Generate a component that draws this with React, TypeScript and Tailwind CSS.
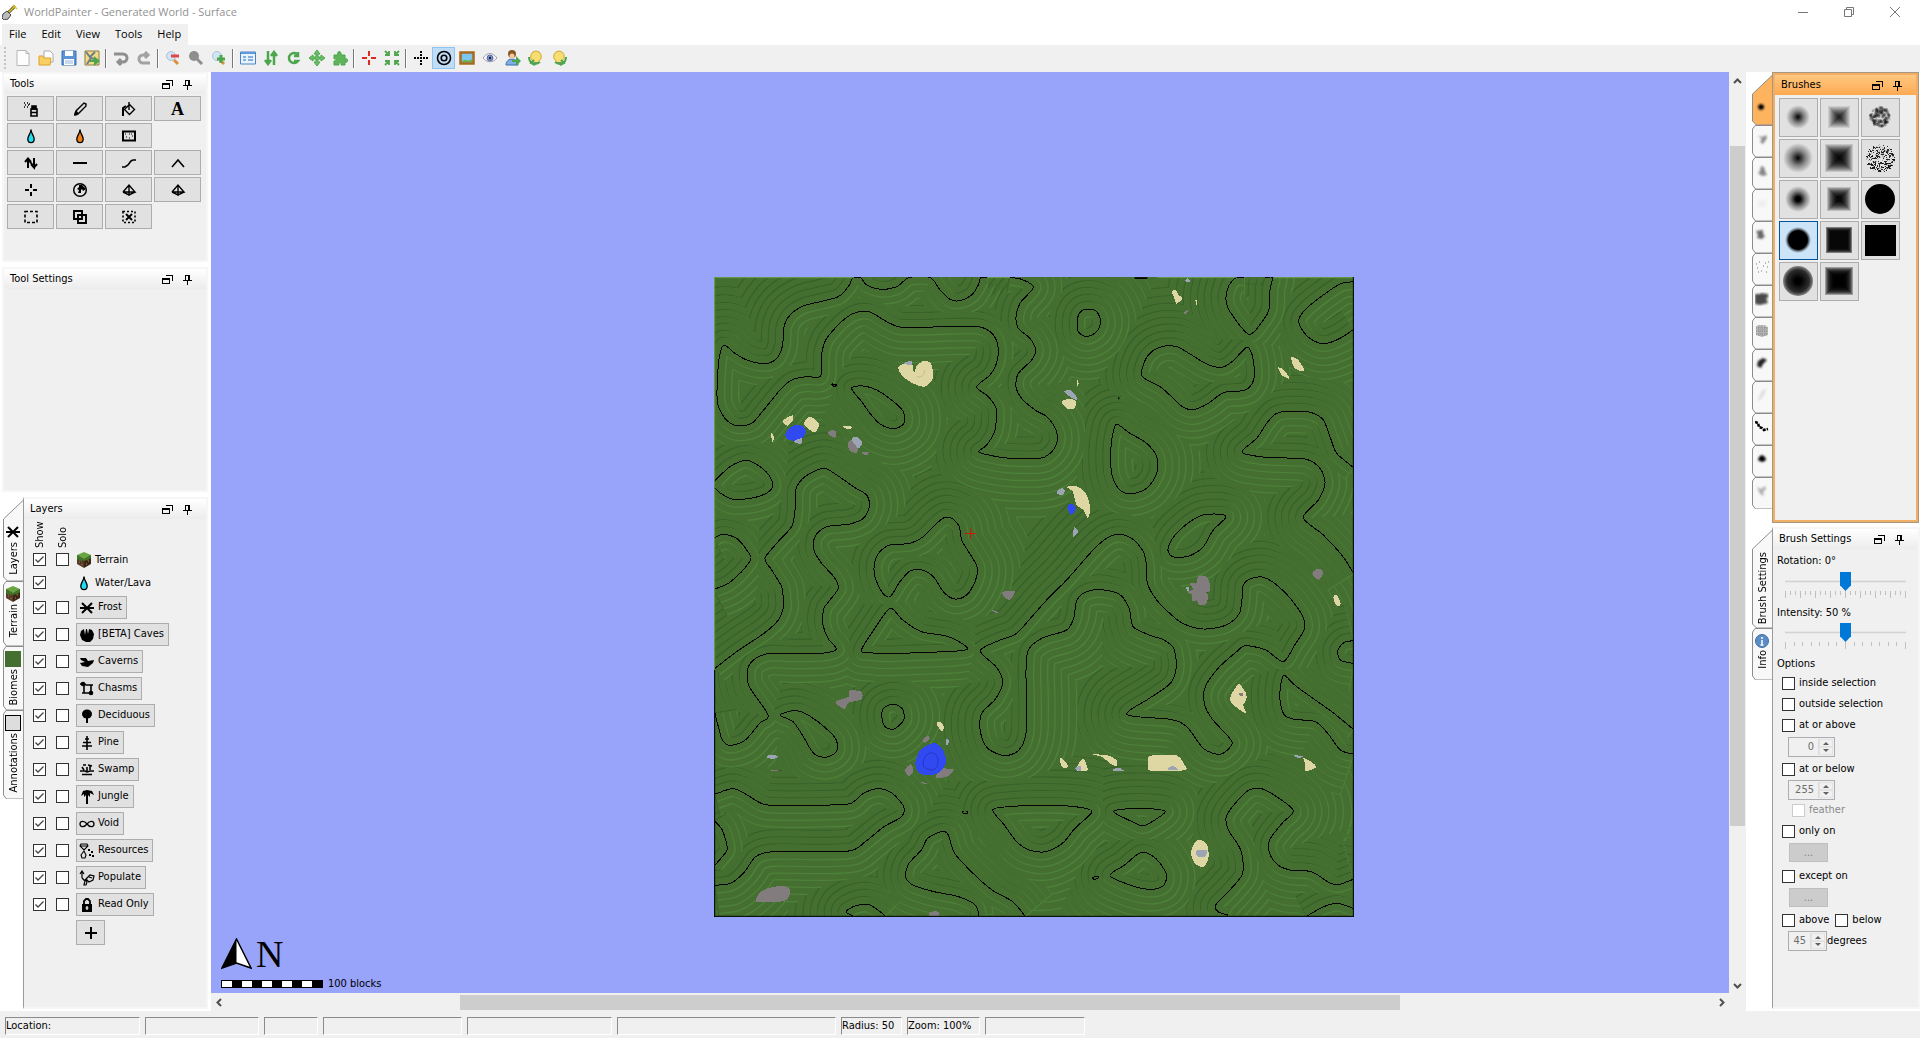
import { useState } from "react";
import type { ReactNode } from "react";
import clsx from "clsx";

type Point = [number, number];

/* ------------------------------------------------------------------ */
/* Terrain map data                                                    */
/* ------------------------------------------------------------------ */

const north = (points: Point[]) => points;
const east = (points: Point[]) => points.map(([x, y]): Point => [x + 960, y]);
const south = (points: Point[]) => points.map(([x, y]): Point => [Math.round(x * 1.2438), y + 960]);

function smooth(points: Point[], closed: boolean) {
  const n = points.length;
  const at = (i: number) => (closed ? points[(i + n) % n] : points[Math.max(0, Math.min(n - 1, i))]);
  let d = `M${points[0][0]} ${points[0][1]}`;
  const last = closed ? n : n - 1;
  for (let i = 0; i < last; i++) {
    const [p0, p1, p2, p3] = [at(i - 1), at(i), at(i + 1), at(i + 2)];
    const c1 = [p1[0] + (p2[0] - p0[0]) / 7, p1[1] + (p2[1] - p0[1]) / 7];
    const c2 = [p2[0] - (p3[0] - p1[0]) / 7, p2[1] - (p3[1] - p1[1]) / 7];
    d += `C${c1.map(Math.round).join(" ")} ${c2.map(Math.round).join(" ")} ${p2.join(" ")}`;
  }
  return closed ? d + "Z" : d;
}

const openContours: Point[][] = [
  [
    ...north([[428, 22], [415, 50], [385, 80], [330, 95], [280, 108], [240, 135], [222, 170], [218, 225], [205, 260], [180, 278], [150, 280], [110, 270], [75, 250], [42, 225], [28, 260], [22, 330], [23, 400], [45, 445], [80, 467], [125, 460], [165, 415], [210, 360], [245, 330], [290, 320], [332, 318], [335, 250], [350, 205], [400, 150], [440, 127], [480, 126], [530, 155], [570, 171], [640, 172], [720, 169], [800, 169], [840, 185], [862, 220], [862, 270], [840, 315], [800, 350], [835, 380], [858, 415], [855, 480], [830, 525], [806, 545], [840, 556], [900, 565]]),
    ...east([[30, 565], [60, 550], [80, 520], [78, 480], [50, 440], [15, 420]]),
    ...north([[935, 385], [918, 350], [925, 310], [965, 270], [977, 240], [960, 205], [925, 175], [918, 140], [930, 100], [970, 52], [935, 28], [900, 22]]),
  ],
  north([[428, 23], [452, 23], [470, 45], [515, 58], [560, 50], [597, 23], [661, 23], [690, 60], [720, 88], [750, 92], [785, 75], [805, 45], [812, 23], [832, 23]]),
  north([[12, 635], [60, 590], [110, 571], [150, 590], [180, 620], [188, 650], [165, 672], [120, 685], [70, 688], [35, 672], [12, 652]]),
  north([[12, 805], [40, 793], [80, 805], [110, 840], [123, 865], [95, 905], [55, 940], [12, 958]]),
  [
    ...south([[12, 235], [70, 180], [130, 130], [165, 90], [178, 50]]),
    ...north([[220, 990], [215, 950], [185, 900], [165, 865], [200, 820], [245, 770], [255, 720], [257, 660], [285, 620], [340, 595], [380, 615], [430, 650], [470, 675], [478, 710], [460, 745], [420, 762], [350, 770], [315, 800], [312, 840], [335, 880], [375, 925], [385, 955], [360, 990]]),
    ...south([[275, 55], [272, 100], [285, 145], [305, 178], [270, 190], [200, 192], [145, 190], [110, 205], [92, 235], [95, 290], [140, 375], [120, 400], [85, 450], [50, 466], [30, 450], [20, 410], [12, 370]]),
  ],
  east([[642, 23], [618, 23], [595, 50], [588, 90], [600, 125], [657, 193], [700, 150], [718, 115], [720, 60], [727, 23], [706, 23]]),
  east([[971, 35], [930, 42], [880, 75], [830, 115], [806, 150], [820, 185], [850, 212], [885, 221], [930, 205], [971, 178]]),
  east([[971, 593], [920, 550], [900, 500], [880, 450], [845, 428], [790, 423], [740, 430], [710, 460], [680, 505], [636, 546], [690, 560], [770, 564], [830, 568], [870, 595], [885, 640], [865, 690], [820, 743], [880, 795], [935, 855], [971, 910]]),
  south([[1552, 152], [1530, 157], [1515, 180], [1520, 210], [1552, 220]]),
  south([[1552, 492], [1520, 480], [1490, 430], [1460, 395], [1410, 388], [1385, 375], [1375, 330], [1377, 280], [1385, 256], [1410, 285], [1460, 330], [1510, 375], [1552, 418]]),
  south([[12, 612], [55, 596], [90, 615], [130, 643], [200, 647], [290, 645], [340, 640], [370, 610], [405, 596], [440, 610], [467, 650], [462, 680], [420, 710], [375, 755], [340, 782], [250, 786], [150, 785], [110, 800], [80, 850], [50, 880], [12, 886]]),
  south([[12, 695], [30, 720], [42, 775], [30, 800], [12, 825]]),
  south([[648, 978], [640, 945], [600, 920], [540, 905], [490, 885], [472, 860], [480, 820], [510, 780], [525, 745], [560, 724], [575, 735], [590, 790], [630, 845], [680, 900], [730, 935], [760, 978]]),
  south([[345, 978], [328, 965], [350, 948], [380, 943], [405, 960], [422, 978]]),
  south([[1250, 976], [1225, 965], [1220, 945], [1250, 905], [1285, 850], [1280, 780], [1250, 720], [1245, 680], [1270, 635], [1300, 600], [1330, 596], [1360, 615], [1407, 662], [1380, 700], [1350, 750], [1350, 790], [1370, 825], [1400, 840], [1450, 845], [1490, 875], [1515, 884], [1552, 868]]),
  south([[1440, 978], [1480, 950], [1515, 940], [1552, 955]]),
];

const closedContours: Point[][] = [
  north([[425, 355], [460, 348], [500, 360], [545, 390], [580, 425], [582, 460], [550, 477], [510, 462], [480, 430], [455, 395]]),
  north([[540, 980], [570, 935], [600, 903], [635, 900], [670, 920], [700, 965], [735, 987], [770, 975], [795, 935], [802, 895], [785, 860], [755, 810], [748, 770], [730, 748], [705, 742], [680, 760], [640, 800], [600, 820], [540, 825], [510, 845], [493, 880], [495, 920], [515, 965]]),
  east([[142, 150], [152, 125], [175, 117], [200, 125], [212, 155], [200, 185], [170, 200], [145, 185]]),
  east([[337, 320], [340, 285], [360, 250], [395, 230], [440, 230], [480, 252], [530, 282], [575, 292], [610, 272], [650, 232], [668, 260], [673, 320], [655, 355], [625, 364], [580, 368], [535, 400], [495, 418], [460, 412], [430, 385], [390, 350]]),
  east([[260, 463], [247, 500], [242, 560], [245, 610], [265, 655], [300, 672], [350, 655], [380, 610], [380, 560], [350, 520], [300, 490]]),
  east([[415, 830], [435, 795], [480, 755], [520, 735], [570, 733], [587, 743], [550, 780], [520, 830], [480, 857], [435, 862], [417, 850]]),
  [
    ...east([[50, 990], [110, 930], [180, 850], [225, 808], [265, 793], [305, 805], [340, 845], [350, 890], [352, 940], [380, 990]]),
    ...south([[1100, 60], [1140, 100], [1190, 117], [1245, 105], [1277, 70], [1284, 20]]),
    ...east([[640, 945], [665, 925], [700, 922], [740, 945], [785, 990]]),
    ...south([[1430, 80], [1433, 120], [1410, 165], [1383, 215], [1340, 180], [1290, 167], [1270, 185], [1225, 235], [1195, 290], [1192, 340], [1210, 385], [1250, 440], [1258, 465], [1230, 493], [1190, 475], [1150, 410], [1110, 388], [1006, 374], [1060, 325], [1110, 280], [1125, 230], [1118, 175], [1095, 150], [1060, 135], [1020, 110], [1012, 60], [990, 15], [950, 0], [910, 4], [885, 30], [878, 80], [860, 120], [800, 145], [768, 180], [762, 240], [764, 330], [762, 430], [745, 480], [710, 497], [670, 475], [652, 425], [655, 370], [690, 325], [706, 275], [690, 230], [652, 182], [700, 150], [740, 130], [780, 75]]),
  ],
  south([[365, 180], [400, 110], [435, 55], [465, 90], [510, 125], [570, 138], [605, 158], [621, 178], [570, 185], [500, 188], [430, 192], [385, 188]]),
  south([[170, 375], [205, 362], [240, 378], [280, 415], [305, 450], [305, 485], [280, 502], [250, 490], [225, 440], [200, 395]]),
  south([[415, 385], [418, 355], [442, 342], [465, 358], [467, 390], [445, 417], [422, 410]]),
  south([[682, 660], [720, 650], [800, 646], [880, 650], [921, 665], [880, 715], [850, 760], [810, 785], [770, 780], [740, 755], [710, 705]]),
  south([[973, 665], [1010, 656], [1060, 656], [1098, 665], [1060, 700], [1040, 707], [1015, 693]]),
  south([[965, 857], [1000, 825], [1040, 787], [1075, 805], [1100, 850], [1095, 885], [1065, 898], [1020, 888]]),
];

// Peaks too small to be ringed by further height lines
const tinyContours: Point[][] = [
  north([[365, 342], [373, 349], [381, 345]]),
  south([[611, 664], [621, 664], [621, 670], [611, 670]]),
  south([[922, 865], [930, 859], [938, 861], [930, 868]]),
];

const SAND = "#dfd7a3";
const STONE = "#827c7e";
const CLAY = "#9da5b4";
const WATER = "#3049f0";

const patches: { fill: string; points: Point[] }[] = [
  { fill: SAND, points: north([[565, 292], [585, 280], [605, 278], [612, 308], [622, 285], [645, 272], [665, 285], [668, 325], [645, 350], [605, 338], [575, 315]]) },
  { fill: CLAY, points: north([[582, 280], [604, 272], [604, 286]]) },
  { fill: SAND, points: north([[218, 452], [248, 436], [248, 452], [232, 467]]) },
  { fill: SAND, points: north([[282, 462], [300, 440], [327, 462], [313, 487]]) },
  { fill: SAND, points: north([[183, 487], [193, 503], [187, 515]]) },
  { fill: SAND, points: north([[399, 470], [420, 468], [425, 475], [412, 477]]) },
  { fill: WATER, points: north([[226, 495], [240, 472], [265, 464], [285, 475], [283, 500], [255, 512], [232, 508]]) },
  { fill: CLAY, points: north([[252, 514], [276, 504], [272, 522]]) },
  { fill: STONE, points: north([[354, 490], [366, 480], [379, 487], [374, 503]]) },
  { fill: STONE, points: north([[413, 520], [430, 508], [445, 520], [440, 548], [420, 542]]) },
  { fill: CLAY, points: north([[425, 508], [440, 501], [456, 517], [445, 535]]) },
  { fill: STONE, points: north([[455, 548], [477, 545], [470, 556]]) },
  { fill: STONE, points: north([[876, 967], [915, 963], [897, 990]]) },
  { fill: SAND, points: east([[426, 65], [437, 60], [445, 75], [457, 85], [440, 101], [433, 85]]) },
  { fill: CLAY, points: east([[465, 33], [474, 24], [482, 37]]) },
  { fill: SAND, points: east([[496, 90], [501, 92], [499, 105]]) },
  { fill: STONE, points: east([[462, 128], [475, 121], [468, 132]]) },
  { fill: SAND, points: east([[783, 262], [805, 270], [823, 303], [795, 295]]) },
  { fill: SAND, points: east([[745, 292], [765, 303], [778, 326], [755, 315]]) },
  { fill: SAND, points: east([[141, 328], [146, 340], [142, 348]]) },
  { fill: SAND, points: east([[94, 395], [120, 386], [138, 395], [132, 415], [110, 415]]) },
  { fill: CLAY, points: east([[102, 365], [122, 361], [138, 378], [139, 390], [120, 380]]) },
  { fill: SAND, points: east([[109, 651], [140, 649], [165, 668], [176, 690], [181, 720], [173, 744], [160, 720], [140, 705], [128, 665]]) },
  { fill: CLAY, points: east([[80, 668], [95, 654], [105, 662], [95, 676]]) },
  { fill: WATER, points: east([[112, 712], [124, 701], [137, 715], [125, 735]]) },
  { fill: CLAY, points: east([[133, 772], [145, 785], [129, 801]]) },
  { fill: STONE, points: east([[478, 938], [500, 940], [505, 918], [532, 922], [540, 962], [510, 968], [500, 990], [486, 990], [488, 955]]) },
  { fill: STONE, points: east([[847, 910], [865, 896], [880, 908], [866, 929]]) },
  { fill: CLAY, points: east([[467, 951], [477, 951], [475, 965]]) },
  { fill: STONE, points: south([[1152, 5], [1180, 0], [1200, 12], [1196, 42], [1180, 44], [1170, 20]]) },
  { fill: SAND, points: south([[1505, 15], [1515, 20], [1521, 42], [1514, 48], [1505, 32]]) },
  { fill: STONE, points: south([[680, 60], [695, 66], [690, 70]]) },
  { fill: STONE, points: south([[303, 335], [335, 320], [335, 302], [365, 305], [365, 328], [335, 338], [323, 357]]) },
  { fill: SAND, points: south([[1254, 325], [1266, 295], [1277, 283], [1293, 310], [1294, 330], [1286, 345], [1292, 370], [1262, 345]]) },
  { fill: STONE, points: south([[1275, 310], [1286, 309], [1283, 320]]) },
  { fill: SAND, points: south([[547, 400], [556, 396], [564, 412], [558, 424]]) },
  { fill: CLAY, points: south([[570, 447], [577, 452], [571, 468]]) },
  { fill: STONE, points: south([[514, 450], [527, 437], [529, 448], [518, 458]]) },
  { fill: STONE, points: south([[470, 540], [485, 522], [490, 545], [480, 558]]) },
  { fill: STONE, points: south([[545, 562], [560, 525], [568, 535], [588, 537], [575, 558]]) },
  { fill: WATER, points: south([[495, 520], [505, 485], [525, 465], [545, 460], [562, 480], [570, 515], [555, 545], [530, 556], [503, 548]]) },
  { fill: CLAY, points: south([[136, 500], [150, 494], [165, 500], [150, 507]]) },
  { fill: STONE, points: south([[145, 539], [165, 541], [152, 544]]) },
  { fill: STONE, points: south([[508, 576], [524, 580], [516, 583]]) },
  { fill: SAND, points: south([[843, 505], [852, 508], [864, 530], [850, 532]]) },
  { fill: SAND, points: south([[885, 530], [898, 507], [905, 515], [910, 541], [885, 542]]) },
  { fill: CLAY, points: south([[880, 536], [893, 528], [893, 543]]) },
  { fill: SAND, points: south([[920, 494], [955, 495], [980, 510], [980, 528], [965, 520], [945, 500]]) },
  { fill: CLAY, points: south([[970, 540], [985, 533], [998, 542], [985, 544]]) },
  { fill: SAND, points: south([[1058, 500], [1070, 496], [1125, 496], [1145, 525], [1143, 541], [1062, 542], [1057, 520]]) },
  { fill: CLAY, points: south([[1105, 539], [1115, 527], [1129, 540]]) },
  { fill: CLAY, points: south([[1409, 496], [1430, 499], [1420, 504]]) },
  { fill: SAND, points: south([[1431, 505], [1450, 515], [1462, 532], [1437, 543], [1436, 520]]) },
  { fill: SAND, points: south([[1160, 790], [1168, 760], [1180, 749], [1198, 762], [1203, 800], [1190, 831], [1170, 820]]) },
  { fill: CLAY, points: south([[1173, 782], [1198, 780], [1194, 799], [1177, 800]]) },
  { fill: STONE, points: south([[112, 935], [122, 905], [155, 890], [188, 892], [192, 915], [180, 932], [150, 936]]) },
  { fill: STONE, points: south([[528, 978], [533, 966], [550, 965], [552, 978]]) },
];

// Widths of the bands around the main contours; their edges are the height lines
const levels = [480, 410, 350, 300, 255, 212, 170, 130, 88, 46];

function TerrainMap() {
  return (
    <svg className="absolute left-[503px] top-[205px] h-[640px] w-[640px]" viewBox="12 21 1920 1920" role="img" aria-label="Surface map">
      <defs>
        <g id="contours" fill="none" strokeLinejoin="round">
          {openContours.map((points, i) => (
            <path key={i} d={smooth(points, false)} />
          ))}
          {closedContours.map((points, i) => (
            <path key={i} d={smooth(points, true)} />
          ))}
        </g>
      </defs>
      <rect x="12" y="21" width="1920" height="1920" fill="#446f31" />
      {levels.map((width) => (
        <g key={width}>
          <use href="#contours" stroke="#38622a" strokeWidth={width} x="-2" y="-2" />
          <use href="#contours" stroke="#4d8038" strokeWidth={width} x="2" y="2" />
          <use href="#contours" stroke="#446f31" strokeWidth={width - 4} />
        </g>
      ))}
      <g shapeRendering="crispEdges" fill="none" stroke="#000" strokeWidth="3">
        <use href="#contours" />
        {tinyContours.map((points, i) => (
          <path key={i} d={smooth(points, true)} />
        ))}
      </g>
      <path d="M1274 22h38v5h-38zM1224 382h4v6h-4z" />
      <g shapeRendering="crispEdges">
        {patches.map((patch, i) => (
          <path key={i} d={smooth(patch.points, true)} fill={patch.fill} />
        ))}
      </g>
      <g fill="none" strokeWidth="3">
        <path d="M620 320q22 5 25-20M238 448l-14 8" stroke="#c9bd83" />
        <path d="M640 1490q-4-40 28-42q22 8 14 40q-14 24-42 2" stroke="#2339c8" />
        <path d="M12 23H432M832 23H900M1342 23H1580M1690 23H1930M14 21V1200" stroke="#66a04e" />
        <path d="M1930 21V1940M12 1939H1932M14 1200V1940" stroke="#000" />
        <path d="M765 790h33M781 774v33" stroke="#d0180e" shapeRendering="crispEdges" />
      </g>
    </svg>
  );
}

/* ------------------------------------------------------------------ */
/* Icons                                                               */
/* ------------------------------------------------------------------ */

function Glyph({ children, className = "size-4" }: { children: ReactNode; className?: string }) {
  return (
    <svg className={clsx("shrink-0", className)} viewBox="0 0 16 16" fill="none" stroke="#000" strokeWidth="1.6" aria-hidden="true">
      {children}
    </svg>
  );
}

const drop = "M8 1.5C8 5 4.8 8 4.8 11a3.2 3.6 0 0 0 6.400 0C11.200 8 8 5 8 1.500z";

const toolRows: { name: string; icon: ReactNode }[][] = [
  [
    { name: "Spray paint", icon: <><path d="M8 15V8h6v7zM8 11.500h6" /><path d="M9 5h4v3H9z" fill="#000" /><path d="M1 2h1M4 2h1M2 4h1M5 4h1M1 6h1M4 6h1M6 3h1" /></> },
    { name: "Pencil", icon: <><path d="M3 13l1-3 8-8 2 1v2l-8 8zM4 10l2 3" strokeWidth="1.400" /><path d="M2 15l1-4 3 3z" fill="#000" stroke="none" /></> },
    { name: "Flood fill", icon: <><path d="M8.500 3.500l5 5-5 5-5-5zM8 1v8" strokeWidth="1.400" /><path d="M2 15V7l3-2" strokeWidth="2" /></> },
    { name: "Text", icon: null },
  ],
  [
    { name: "Flood with water", icon: <path d={drop} fill="#22dff0" strokeWidth="1.3" /> },
    { name: "Flood with lava", icon: <path d={drop} fill="#ee7d12" strokeWidth="1.3" /> },
    { name: "Sponge", icon: <><path d="M2 3.500h12v9H2z" strokeWidth="2" /><path d="M4 6h1M8 6h1M11 8h1M5 9h1M8 10h1M10 6h1" strokeWidth="1" /></> },
  ],
  [
    { name: "Height", icon: <path d="M5 13V4M2 7l3-3.500L8 7M5 4l6 8V3M8 9l3 3.500L14 9" strokeWidth="2" /> },
    { name: "Flatten", icon: <path d="M1 8h14" strokeWidth="2" /> },
    { name: "Smooth", icon: <path d="M1 12h3l3-2 3-4 2-1h3" /> },
    { name: "Raise mountain", icon: <path d="M2 12l6-7 6 7" /> },
  ],
  [
    { name: "Set spawn point", icon: <path d="M8 2v4M8 10v4M2 8h4M10 8h4" strokeWidth="2" /> },
    { name: "Global operations", icon: <><circle cx="8" cy="8" r="6.3" strokeWidth="1.500" /><path d="M7 3l3 0 4 4-3 2-1-2-1 1v3l-3 0 1-3-2-1 2-2z" fill="#000" stroke="none" /></> },
    { name: "Raise 180", icon: <path d="M2 10l6-7 6 7H2M8 3v11M2 10l6 3 6-3" strokeWidth="1.4" /> },
    { name: "Raise 90", icon: <path d="M2 10l6-7 6 7H2M8 3v11M2 10l6 3 6-3" strokeWidth="1.4" /> },
  ],
  [
    { name: "Edit selection", icon: <path d="M2 2.500h12v11H2z" strokeDasharray="3 2" /> },
    { name: "Copy selection", icon: <path d="M2 2h8v8H2zM6 6h8v8H6z" strokeWidth="1.900" /> },
    { name: "Clear selection", icon: <><path d="M2 2.500h12v11H2z" strokeDasharray="2 2" /><path d="M5 5l6 6M11 5l-6 6" strokeWidth="1.900" /></> },
  ],
];

const terrainIcon = (
  <Glyph>
    <g stroke="none">
      <path d="M8 0l7 3-7 4-7-4z" fill="#68a53f" />
      <path d="M1 3l7 4v9l-7-4z" fill="#5a3b28" />
      <path d="M15 3L8 7v9l7-4z" fill="#3c2618" />
      <path d="M1 3l7 4v2L6 8v2L4 8v1L1 7zM15 3L8 7v2l3-1v1l4-3z" fill="#417326" />
      <path d="M3 9h1v2H3zM5 12h2v1H5zM10 11h1v2h-1zM12 8h1v2h-1z" fill="#7c5840" />
    </g>
  </Glyph>
);

const frostIcon = <Glyph><path d="M1 8h14M3 3l10 10M13 3L3 13" strokeWidth="2" /></Glyph>;

const layers: { name: string; icon: ReactNode; solo?: boolean; plain?: boolean }[] = [
  { name: "Terrain", plain: true, solo: true, icon: terrainIcon },
  { name: "Water/Lava", plain: true, icon: <Glyph><path d={drop} fill="#22dff0" strokeWidth="1.3" /></Glyph> },
  { name: "Frost", solo: true, icon: frostIcon },
  { name: "[BETA] Caves", solo: true, icon: <Glyph><path d="M1 8l1-4 3-2 1 6 1-6h1l1 5 1-5 3 1 2 4-1 5-3 3-4 0-4-2zM12 4v3" fill="#000" stroke="none" /></Glyph> },
  { name: "Caverns", solo: true, icon: <Glyph><path d="M1 4l6 0 2 3 6-1-1 3-5 4-6-1-2-3 5-1-4-2z" fill="#000" stroke="none" /></Glyph> },
  { name: "Chasms", solo: true, icon: <Glyph><path d="M1 3h5l1 1h7M5 3v9h7V9M12 9V4M3 12h3" /><circle cx="4" cy="3" r="1.500" fill="#000" /><circle cx="12" cy="12" r="1.500" fill="#000" /></Glyph> },
  { name: "Deciduous", solo: true, icon: <Glyph><ellipse cx="8" cy="6" rx="5" ry="4.500" fill="#000" stroke="none" /><path d="M8 8v7" strokeWidth="2" /></Glyph> },
  { name: "Pine", solo: true, icon: <Glyph><path d="M8 1v14M6 4h4M4 7.500h8M3 11h10" /></Glyph> },
  { name: "Swamp", solo: true, icon: <Glyph><path d="M1 9h5l2 1 3-1h4M3 12.500h10M8 9V5M5 8L3 5M11 8V4M4 3h3M9 3l4 1" /></Glyph> },
  { name: "Jungle", solo: true, icon: <Glyph><path d="M8 5v10" strokeWidth="2" /><path d="M2 7l2-5 4-1 5 1 2 4-4-2v4L8 5 5 8V5z" fill="#000" stroke="none" /></Glyph> },
  { name: "Void", solo: true, icon: <Glyph><path d="M8 8C5 4 1 5 1 8s4 4 7 0 7-3 7 0-4 4-7 0z" strokeWidth="1.3" /></Glyph> },
  { name: "Resources", solo: true, icon: <Glyph><path d="M2 1h6l1 2-4 4-4-4zM1 3h8M5 8l-3 4 1 3h3l1-3z" strokeWidth="1.1" /><path d="M9 7h2M12 9h2M10 12h2M13 13h2" strokeWidth="2" /></Glyph> },
  { name: "Populate", solo: true, icon: <Glyph><path d="M3 8V1M1 4l2-3 2 3M3 8l3 3-1 4h2l1-3-2-3M7 9l4-4 4 1-1 4-4 2zM10 7l3 1" strokeWidth="1.2" /></Glyph> },
  { name: "Read Only", solo: true, icon: <Glyph><path d="M5 7V4l2-2h2l2 2v3" strokeWidth="1.8" /><path d="M3 7h10v8H3z" fill="#000" stroke="none" /><path d="M8 9v4M6.500 11h3" stroke="#fff" strokeWidth="1.2" /></Glyph> },
];

const lens = <><circle cx="6" cy="6" r="4.5" fill="#cfe4f5" stroke="#a9c4da" strokeWidth="1" /><path d="M9 10l4 4" stroke="#d9913a" strokeWidth="3" /></>;
const bulb = <><path d="M8 1a5.500 5.500 0 0 1 3 10l-1 2H6l-1-2a5.500 5.500 0 0 1 3-10z" fill="#f7dd72" stroke="#d6a93a" strokeWidth="1" /><path d="M6 12h4v2H6z" fill="#888" stroke="none" /></>;
const GREEN = "#4ba64c";

const toolbarGroups: { name: string; icon: ReactNode; active?: boolean }[][] = [
  [
    { name: "New world", icon: <><path d="M2 .5h9l3 3v12H2z" fill="#fdfdfd" stroke="#b5b5b5" strokeWidth="1" /><path d="M11 .5v3h3" stroke="#b5b5b5" strokeWidth="1" /></> },
    { name: "Open world", icon: <><path d="M6 1h6l3 3v8H6z" fill="#fff" stroke="#aaa" strokeWidth="1" /><path d="M1 6h4l1 2h7l-1 7H1z" fill="#f9cf63" stroke="#dda12f" strokeWidth="1" /></> },
    { name: "Save world", icon: <><path d="M1 1h14v14H1z" fill="#5c95d6" stroke="#3c70b4" strokeWidth="1" /><path d="M4 1h8v5H4zM3 9h10v6H3z" fill="#fff" stroke="none" /><path d="M4 11h8M4 13h8" stroke="#8fb4de" strokeWidth="1" /></> },
    { name: "Export", icon: <><path d="M1 1h14v14H1z" fill="#f3da83" stroke="#8c7a4a" strokeWidth="1" /><path d="M2 2l4 5 5-5M3 14l4-6 3 1" stroke="#6b7f86" strokeWidth="2" /><path d="M6 10h4V6l6 5-6 5v-4H6z" fill={GREEN} stroke="none" /></> },
  ],
  [
    { name: "Undo", icon: <path d="M1 4h9a4 4 0 0 1 0 8H5M8 9l-3 3 3 3" stroke="#8f8f8f" strokeWidth="3" /> },
    { name: "Redo", icon: <path d="M12 5H7a4 4 0 0 0 0 8h7M9 2l3 3-3 3" stroke="#a2a2a2" strokeWidth="3" /> },
  ],
  [
    { name: "Zoom out", icon: <>{lens}<path d="M6 6h8" stroke="#e04848" strokeWidth="3" /></> },
    { name: "Reset zoom", icon: <><circle cx="6" cy="6" r="5" fill="#8f8f8f" stroke="none" /><path d="M9 9l5 5" stroke="#8f8f8f" strokeWidth="3" /></> },
    { name: "Zoom in", icon: <>{lens}<path d="M6 9h8M10 5v8" stroke={GREEN} strokeWidth="3" /></> },
  ],
  [
    { name: "Dimension properties", icon: <><path d="M.5 2h15v12H.5z" fill="#eaf3fc" stroke="#4c83c4" strokeWidth="1" /><path d="M1 3h14" stroke="#5f98dc" strokeWidth="2" /><path d="M3 7h3M3 10h3M8 7h5M8 10h5" stroke="#5f98dc" strokeWidth="1.5" /></> },
    { name: "Shift height", icon: <path d="M5 1v12M2 10l3 4 3-4M11 15V3M8 6l3-4 3 4" stroke={GREEN} strokeWidth="2.5" /> },
    { name: "Rotate", icon: <path d="M12 5a5 5 0 1 0 0 6H8M12 2v4H8" stroke={GREEN} strokeWidth="2.5" /> },
    { name: "Move", icon: <path d="M8 0l3 4H9v3h3V5l4 3-4 3V9H9v3h2l-3 4-3-4h2V9H4v2L0 8l4-3v2h3V4H5z" fill="#6cc065" stroke={GREEN} strokeWidth="1" /> },
    { name: "Plugins", icon: <path d="M2 5h4C4 1 10 0 9 5h4v4c4-1 4 4 0 3v3H9c1-3-3-3-2 0H2v-4c3 0 3-3 0-2z" fill="#5fb45a" stroke={GREEN} strokeWidth="1" /> },
  ],
  [
    { name: "Move to spawn", icon: <path d="M8 1v5M8 10v5M1 8h5M10 8h5" stroke="#e02a20" strokeWidth="2" /> },
    { name: "Move to origin", icon: <path d="M1 1l4 4M5 1v4H1M15 1l-4 4M11 1v4h4M1 15l4-4M5 15v-4H1M15 15l-4-4M11 15v-4h4" stroke={GREEN} strokeWidth="1.8" /> },
  ],
  [
    { name: "Grid", icon: <path d="M8 1v15M1 8h15" strokeWidth="2" strokeDasharray="2 1" /> },
    { name: "Contours", active: true, icon: <><circle cx="8" cy="8" r="6.500" /><circle cx="8" cy="8" r="2.800" /></> },
    { name: "Image overlay", icon: <><path d="M1.500 2.500h13v11h-13z" fill="#7cc7f2" stroke="#a8691c" strokeWidth="2.5" /><path d="M3 12c2-5 5 1 10-3v3z" fill="#68b23c" stroke="none" /></> },
    { name: "View distance", icon: <><path d="M1 8c4-6 10-6 14 0-4 5-10 5-14 0z" fill="#f3f6fb" stroke="#a7a0a0" strokeWidth="1" /><circle cx="8" cy="8" r="3" fill="#7d90cc" stroke="#5b70ad" strokeWidth="1" /><circle cx="8" cy="8" r="1.200" fill="#223" stroke="none" /></> },
    { name: "Walking distance", icon: <><circle cx="7" cy="4" r="4" fill="#8a5524" stroke="none" /><path d="M1 15c0-8 12-8 12 0z" fill="#7faee6" stroke="#3b6db0" strokeWidth="1" /><circle cx="7" cy="6" r="2.500" fill="#f2c79d" stroke="none" /><path d="M7 10h4V6l5 5-5 5v-4H7z" fill={GREEN} stroke="none" /></> },
    { name: "Light rotates left", icon: <>{bulb}<path d="M1 7c0 6 6 9 11 5M6 10l-3 3 4 2" stroke={GREEN} strokeWidth="2" /></> },
    { name: "Light rotates right", icon: <>{bulb}<path d="M15 7c0 6-6 9-11 5M10 10l3 3-4 2" stroke={GREEN} strokeWidth="2" /></> },
  ],
];

/* ------------------------------------------------------------------ */
/* Small controls                                                      */
/* ------------------------------------------------------------------ */

interface CheckProps {
  label: string;
  checked?: boolean;
  disabled?: boolean;
  hideLabel?: boolean;
}

function Check({ label, checked = false, disabled, hideLabel }: CheckProps) {
  const [on, setOn] = useState(checked);
  return (
    <label className={clsx("flex h-[13px] items-center gap-1 whitespace-nowrap", disabled && "text-[#8a8a8a]")}>
      <span className="relative block size-[13px] shrink-0">
        <input
          type="checkbox"
          aria-label={label}
          checked={on}
          disabled={disabled}
          onChange={() => setOn(!on)}
          className={clsx("block size-[13px] appearance-none border bg-white", disabled ? "border-[#cccccc]" : "border-[#333333]")}
        />
        {on && (
          <svg className="pointer-events-none absolute inset-0 size-[13px]" viewBox="0 0 13 13" fill="none" stroke="#444" strokeWidth="1.3">
            <path d="M2.500 6.500L5 9l5.500-5.500" />
          </svg>
        )}
      </span>
      {!hideLabel && <span>{label}</span>}
    </label>
  );
}

function Spinner({ label, value, small }: { label: string; value: number; small?: boolean }) {
  return (
    <div className={clsx("flex h-5 border border-[#abadb3] bg-[#f0f0f0] p-px", small ? "w-[39px]" : "w-[47px]")}>
      <input aria-label={label} defaultValue={value} disabled className="min-w-0 flex-1 bg-[#f0f0f0] pr-1 text-right text-[#6d6d6d]" />
      <div className="flex w-[15px] flex-col border-l border-[#dcdcdc]">
        {["M2 5l3-3 3 3z", "M2 1l3 3 3-3z"].map((d) => (
          <button key={d} disabled aria-label="Step" className="flex flex-1 items-center justify-center border border-[#e2e2e2]">
            <svg className="h-[6px] w-[10px]" viewBox="0 0 10 6"><path d={d} fill="#606060" /></svg>
          </button>
        ))}
      </div>
    </div>
  );
}

function Slider({ label, ticks, major }: { label: string; ticks: number; major: number }) {
  return (
    <div className="pr-3 pl-2">
      <input
        type="range"
        aria-label={label}
        defaultValue={50}
        className="block h-[19px] w-full appearance-none bg-[linear-gradient(#d2d2d2,#d2d2d2),linear-gradient(#e7e7e7,#e7e7e7)] bg-[length:100%_1px,100%_3px] bg-center bg-no-repeat [&::-webkit-slider-thumb]:h-[19px] [&::-webkit-slider-thumb]:w-[11px] [&::-webkit-slider-thumb]:appearance-none [&::-webkit-slider-thumb]:bg-[#0078d7] [&::-webkit-slider-thumb]:[clip-path:polygon(0_0,100%_0,100%_70%,50%_100%,0_70%)]"
      />
      <div className="flex h-2 justify-between">
        {Array.from({ length: ticks }, (_, i) => (
          <span key={i} className={clsx("w-px bg-[#c0c0c0]", i % major === 0 ? "h-[7px]" : "h-[4px]")} />
        ))}
      </div>
    </div>
  );
}

function PanelHeader({ title, active }: { title: string; active?: boolean }) {
  return (
    <header
      className={clsx(
        "flex h-5 shrink-0 items-center pl-[6px]",
        active ? "bg-linear-to-b from-[#ffc880] to-[#fda951]" : "bg-linear-to-b from-white to-[#ececec]"
      )}
    >
      <h2 className="flex-1">{title}</h2>
      <button aria-label={`Float ${title}`} className="mr-[9px] size-[11px]">
        <svg viewBox="0 0 11 11" fill="none" stroke="#000" shapeRendering="crispEdges">
          <path d="M.5 4.500h7v5h-7zM.5 5.500h7M3.500 1.500h7v5" />
        </svg>
      </button>
      <button aria-label={`Pin ${title}`} className="mr-[13px] size-[11px]">
        <svg viewBox="0 0 11 11" fill="none" stroke="#000" shapeRendering="crispEdges">
          <path d="M3.500 6V1.500h4V6M6.500 2v4M1 6.500h9M5.500 7v4" />
        </svg>
      </button>
    </header>
  );
}

interface SideTabProps {
  label: string;
  icon?: ReactNode;
  height: number;
  className: string;
  slanted?: boolean;
  active?: boolean;
  hideLabel?: boolean;
}

function SideTab({ label, icon, height, className, slanted, active, hideLabel }: SideTabProps) {
  const shape = slanted ? `M20.500 0v3L.5 22v${height - 26}l4 4h16` : `M20.500.5H3L.5 4v${height - 8}l3 4h17`;
  return (
    <button aria-label={label} className={clsx("relative flex w-5 shrink-0 flex-col items-center", className)}>
      <svg className="absolute inset-0 size-full" viewBox={`0 0 20 ${height}`} aria-hidden="true">
        <path d={shape} fill={active ? "#feb45f" : "#f8f8f8"} stroke="#8c8c8c" strokeWidth="1" />
      </svg>
      <span className="relative flex flex-col items-center gap-[2px]">
        {icon}
        {!hideLabel && <span className="rotate-180 leading-none whitespace-nowrap [writing-mode:vertical-rl]">{label}</span>}
      </span>
    </button>
  );
}

/* ------------------------------------------------------------------ */
/* Brushes                                                             */
/* ------------------------------------------------------------------ */

interface Brush {
  name: string;
  kind: "circle" | "square" | "cloud" | "noise" | "disc" | "block";
  size?: number;
  core?: number;
  strength?: number;
  dome?: boolean;
}

const brushes: Brush[] = [
  { name: "Spike circle", kind: "circle", size: 12 },
  { name: "Spike square", kind: "square", size: 11, strength: 0.09 },
  { name: "Noise cloud", kind: "cloud" },
  { name: "Linear circle", kind: "circle", size: 15 },
  { name: "Linear square", kind: "square", size: 14, strength: 0.12 },
  { name: "Noise", kind: "noise" },
  { name: "Cosine circle", kind: "circle", size: 13, core: 18 },
  { name: "Cosine square", kind: "square", size: 12, core: 3, strength: 0.17 },
  { name: "Constant circle", kind: "disc" },
  { name: "Plateau circle", kind: "circle", size: 13, core: 72 },
  { name: "Plateau square", kind: "square", size: 13, core: 9, strength: 0.45 },
  { name: "Constant square", kind: "block" },
  { name: "Dome circle", kind: "circle", size: 15, core: 20, dome: true },
  { name: "Dome square", kind: "square", size: 14, core: 2, strength: 0.3, dome: true },
];

const noise = (n: number) => {
  const v = Math.sin(n * 127.1 + 11.7) * 43758.5453;
  return v - Math.floor(v);
};

const speckles = Array.from({ length: 420 }, (_, i) => ({
  x: 5 + noise(i) * 28,
  y: 5 + noise(i + 1000) * 28,
  shade: noise(i + 2000),
})).filter(({ x, y }) => Math.hypot(x - 19, y - 19) < 14);

function BrushPreview({ brush, index }: { brush: Brush; index: number }) {
  const { kind, size = 12, core = 0, strength = 0.1, dome } = brush;
  return (
    <svg className="size-[37px]" viewBox="1 1 37 37" aria-hidden="true">
      {kind === "circle" && (
        <>
          <radialGradient id={`brush-${index}`}>
            <stop offset={`${core}%`} stopColor="#000" stopOpacity="1" />
            <stop offset={dome ? "75%" : `${(core + 100) / 2}%`} stopColor="#000" stopOpacity={dome ? 0.8 : 0.42} />
            <stop offset="100%" stopColor="#000" stopOpacity={dome ? 0.4 : 0} />
          </radialGradient>
          <circle cx="19" cy="19" r={size} fill={`url(#brush-${index})`} />
        </>
      )}
      {kind === "square" &&
        Array.from({ length: size - core }, (_, i) => {
          const half = size - i;
          return <rect key={i} x={19 - half} y={19 - half} width={half * 2} height={half * 2} fillOpacity={core > 5 ? strength : strength + i / 80} />;
        })}
      {kind === "square" && core > 0 && <rect x={19 - core} y={19 - core} width={core * 2} height={core * 2} fillOpacity="0.6" />}
      {kind === "cloud" && (
        <g className="blur-[0.5px]">
          {speckles
            .filter(({ x, y }) => Math.hypot(x - 19, y - 19) < 10)
            .map(({ x, y, shade }, i) => <circle key={i} cx={x} cy={y} r="1.500" fillOpacity={shade * 0.4} />)}
        </g>
      )}
      {kind === "noise" &&
        speckles.map(({ x, y, shade }, i) => (
          <rect key={i} x={Math.round(x)} y={Math.round(y)} width={shade > 0.85 ? 2 : 1} height="1" fillOpacity={shade > 0.5 ? 0.8 : 0.2} />
        ))}
      {kind === "disc" && <circle cx="19" cy="19" r="15" />}
      {kind === "block" && <rect x="4" y="4" width="31" height="31" />}
    </svg>
  );
}

// Thumbnails on the brush category tabs
const smudge = (d: string, fill: string) => (
  <svg className="size-[14px]" viewBox="0 0 14 14" aria-hidden="true">
    <path d={d} fill={fill} className="blur-[1px]" />
  </svg>
);

const brushTabs = [
  { name: "Cracks", icon: smudge("M3 4l5 1 3-2 1 3-4 6-3-2 2-3z", "#8a8a8a") },
  { name: "Hills", icon: smudge("M6 2l3 1 1 4 2 4-5 1-4-3 2-2z", "#888") },
  { name: "Fog", icon: smudge("M3 4h8v7H3z", "#efefef") },
  { name: "Ruins", icon: smudge("M1 3l7-1v4l2 2-3 3-5-1 1-3z", "#666") },
  { name: "Dots", icon: <svg className="size-[14px]" viewBox="0 0 14 14"><path d="M1 4h1M4 2h1M10 3h1M8 6h1M2 8h1M12 7h1M6 11h1M11 12h1M3 12h1M13 2h1" stroke="#777" /></svg> },
  { name: "Blocks", icon: smudge("M0 2l5 0 1-1 7 1v4l-2 0 2 5-8 2-5-1z", "#4a4a4a") },
  { name: "Stone", icon: <svg className="size-[14px]" viewBox="0 0 14 14"><path d="M1 2l6-1 6 2v8l-6 2-6-2z" fill="#b5b5b5" /><path d="M1 4h12M1 7h12M1 10h12M4 1v12M7 1v12M10 1v12" stroke="#8b8b8b" strokeDasharray="1 1" /></svg> },
  { name: "Ridge", icon: smudge("M3 5l5-3 4 2-4 4-2 4-4-2z", "#202020") },
  { name: "Wisps", icon: smudge("M8 2l3-1-2 6-4 5H3l2-5z", "#dcdcdc") },
  { name: "Chain", icon: <svg className="size-[14px]" viewBox="0 0 14 14"><path d="M0 2l3 1 1 4 3 1 2 2 4-1" fill="none" stroke="#000" strokeWidth="2.5" strokeDasharray="3 1" /></svg> },
  { name: "Burst", icon: smudge("M5 4l2-1 3 2 1 3-3 2-4-1-1-2z", "#000") },
  { name: "Splash", icon: smudge("M2 3l4 2 4-3 1 3-3 3 1 4-4-2z", "#b0b0b0") },
];

/* ------------------------------------------------------------------ */
/* Window sections                                                     */
/* ------------------------------------------------------------------ */

function TitleBar() {
  return (
    <div className="flex h-6 items-center bg-white pr-5 font-['Open_Sans',sans-serif]">
      <svg className="ml-[2px] size-4" viewBox="0 0 16 16" aria-hidden="true">
        <path d="M6 9l7-7" stroke="#4a4510" strokeWidth="3" />
        <path d="M6 9l7-7M11 1l4 4" stroke="#d6c72e" strokeWidth="1.5" />
        <path d="M5 7l4 4-3 4-4 1-2-2 1-4z" fill="#bcbcbc" stroke="#444" />
      </svg>
      <h1 className="ml-[6px] flex-1 text-[11px] text-[#929292]">WorldPainter - Generated World - Surface</h1>
      <div className="flex gap-9">
        <button aria-label="Minimize" className="size-[10px]"><svg viewBox="0 0 10 10"><path d="M0 5.500h10" stroke="#777" /></svg></button>
        <button aria-label="Restore" className="size-[10px]"><svg viewBox="0 0 10 10" fill="none" stroke="#777"><path d="M.5 2.500h7v7h-7zM2.500 2.500v-2h7v7h-2" /></svg></button>
        <button aria-label="Close" className="size-[10px]"><svg viewBox="0 0 10 10"><path d="M0 0l10 10M10 0L0 10" stroke="#777" /></svg></button>
      </div>
    </div>
  );
}

function MenuBar() {
  return (
    <nav className="flex h-[21px] bg-white font-['Open_Sans',sans-serif] text-[11px]">
      <div className="ml-[2px] flex items-center gap-[15px] bg-[#f0f0f0] pr-[7px] pl-[7px]">
        {["File", "Edit", "View", "Tools", "Help"].map((item) => (
          <button key={item}>{item}</button>
        ))}
      </div>
    </nav>
  );
}

function Toolbar() {
  return (
    <div role="toolbar" className="flex h-[27px] items-center bg-[#f0f0f0] pb-px pl-1">
      <div className="mr-[5px] h-[22px] border-l-2 border-dotted border-[#c4c4c4]" />
      {toolbarGroups.map((group, i) => (
        <div key={i} className="flex items-center">
          {i > 0 && <div className="mx-[2px] h-[19px] w-[2px] border-l border-[#777777] bg-white" />}
          {group.map((tool) => (
            <button
              key={tool.name}
              aria-label={tool.name}
              className={clsx("flex h-[22px] w-[23px] items-center justify-center", tool.active && "border border-[#90c4f0] bg-[#c0ddf5]")}
            >
              <Glyph>{tool.icon}</Glyph>
            </button>
          ))}
        </div>
      ))}
    </div>
  );
}

function ToolsPanel() {
  return (
    <section className="mr-[3px] ml-[2px] h-[190px] border-2 border-[#f6f6f6] bg-[#f0f0f0]">
      <PanelHeader title="Tools" />
      <div className="mt-[2px] grid grid-cols-4 gap-[2px] pr-[5px] pl-[3px]">
        {toolRows.flatMap((row, r) =>
          row.map((tool, c) => (
            <button
              key={tool.name}
              aria-label={tool.name}
              className={clsx("flex h-[25px] items-center justify-center border border-[#adadad] bg-[#e1e1e1]", c === 0 && r > 0 && "col-start-1")}
            >
              {tool.icon ? <Glyph>{tool.icon}</Glyph> : <span className="font-['Liberation_Serif',serif] text-lg font-bold leading-none">A</span>}
            </button>
          ))
        )}
      </div>
    </section>
  );
}

function LayersPanel() {
  return (
    <div className="flex min-h-0 flex-1">
      <div className="ml-[3px] flex w-5 flex-col">
        <SideTab slanted label="Layers" height={84} className="h-[84px] pt-[27px]" icon={frostIcon} />
        <SideTab label="Terrain" height={65} className="h-[65px] pt-[5px]" icon={terrainIcon} />
        <SideTab label="Biomes" height={64} className="h-[64px] pt-[5px]" icon={<span className="size-4 bg-[#446f31]" />} />
        <SideTab label="Annotations" height={89} className="h-[89px] pt-[5px]" icon={<span className="size-4 border border-black bg-[#dddddd]" />} />
      </div>
      <section className="mr-[3px] flex flex-1 flex-col border-2 border-[#f6f6f6] border-l-[#9a9a9a] bg-[#f0f0f0] [border-left-width:1px]">
        <PanelHeader title="Layers" />
        <div className="mt-[3px] flex h-[26px] gap-[9px] pl-[9px]">
          {["Show", "Solo"].map((heading) => (
            <span key={heading} className="w-[14px] rotate-180 leading-[14px] whitespace-nowrap [writing-mode:vertical-rl]">{heading}</span>
          ))}
        </div>
        <div className="flex flex-col pl-[9px]">
          {layers.map((layer) => (
            <div key={layer.name} className={clsx("flex items-center", layer.plain ? "h-[23px]" : "h-[27px]")}>
              <Check checked hideLabel label={`Show ${layer.name}`} />
              <span className="mr-[7px] ml-[10px] w-[13px]">{layer.solo && <Check hideLabel label={`Solo ${layer.name}`} />}</span>
              {layer.plain ? (
                <span className="flex items-center gap-[3px] leading-none">{layer.icon}{layer.name}</span>
              ) : (
                <button className="flex h-[23px] items-center gap-[3px] border border-[#adadad] bg-[#e1e1e1] pr-1 pl-[2px]">
                  {layer.icon}
                  {layer.name}
                </button>
              )}
            </div>
          ))}
          <button aria-label="Add layer" className="mt-[2px] ml-[43px] flex h-[25px] w-[29px] items-center justify-center border border-[#adadad] bg-[#e1e1e1]">
            <Glyph><path d="M8 2v12M2 8h12" strokeWidth="2" /></Glyph>
          </button>
        </div>
      </section>
    </div>
  );
}

function ScrollArrow({ d, label }: { d: string; label: string }) {
  return (
    <button aria-label={label} className="flex size-4 shrink-0 items-center justify-center">
      <svg className="size-[9px]" viewBox="0 0 9 9" fill="none" stroke="#505050" strokeWidth="2"><path d={d} /></svg>
    </button>
  );
}

function MapView() {
  return (
    <main className="grid min-w-0 flex-1 grid-cols-[minmax(0,1fr)_17px] grid-rows-[minmax(0,1fr)_18px]">
      <div className="relative overflow-hidden bg-[#98a3fa]">
        <TerrainMap />
        <div className="absolute bottom-px left-[10px]">
          <div className="flex h-9 items-center gap-[4px]">
            <svg className="h-[32px] w-[31px]" viewBox="0 0 31 32" aria-hidden="true">
              <path d="M15.500 1L30 30l-14.500-5L1 30z" fill="#fff" stroke="#000" strokeWidth="1.5" />
              <path d="M15.500 1v24L1 30z" />
            </svg>
            <span className="font-['Liberation_Serif',serif] text-[38px] leading-none">N</span>
          </div>
          <div className="mt-1 flex items-center gap-[5px]">
            <div className="flex h-[8px] w-[102px] border border-black bg-black">
              {Array.from({ length: 10 }, (_, i) => (
                <span key={i} className={clsx("flex-1", i % 2 === 0 ? "bg-white" : "bg-black")} />
              ))}
            </div>
            <span>100 blocks</span>
          </div>
        </div>
      </div>
      <div className="flex flex-col items-center bg-[#f0f0f0] pt-px">
        <ScrollArrow label="Scroll up" d="M1 6l3.500-3.500L8 6" />
        <div className="h-[57px]" />
        <div className="w-[15px] flex-[680] bg-[#cdcdcd]" />
        <div className="flex-[151]" />
        <ScrollArrow label="Scroll down" d="M1 3l3.500 3.500L8 3" />
      </div>
      <div className="flex items-center bg-[#f0f0f0]">
        <ScrollArrow label="Scroll left" d="M6 1L2.500 4.500 6 8" />
        <div className="flex-[233]" />
        <div className="h-[15px] flex-[940] bg-[#cdcdcd]" />
        <div className="flex-[313]" />
        <ScrollArrow label="Scroll right" d="M3 1l3.500 3.500L3 8" />
      </div>
      <div className="bg-[#f0f0f0]" />
    </main>
  );
}

function BrushesPanel() {
  const [selected, setSelected] = useState("Plateau circle");
  return (
    <div className="flex h-[451px]">
      <div className="flex w-5 flex-col">
        <SideTab slanted active hideLabel label="Default" height={53} className="h-[53px] pt-[28px]" icon={smudge("M6 4a3 3 0 1 0 .1 0z", "#000")} />
        {brushTabs.map((tab) => (
          <SideTab key={tab.name} hideLabel label={tab.name} height={32} className="h-[32px] pt-[7px]" icon={tab.icon} />
        ))}
      </div>
      <section className="mr-px flex-1 border-[3px] border-[#f0ae67] bg-[#f0f0f0] outline outline-1 -outline-offset-1 outline-[#a8977f]">
        <PanelHeader title="Brushes" active />
        <div className="mt-[3px] grid grid-cols-[39px_39px_39px] gap-[2px] pl-1">
          {brushes.map((brush, i) => (
            <button
              key={brush.name}
              aria-label={brush.name}
              onClick={() => setSelected(brush.name)}
              className={clsx(
                "flex size-[39px] items-center justify-center border",
                selected === brush.name ? "border-[#005499] bg-[#cce4f7]" : "border-[#adadad] bg-[#e1e1e1]"
              )}
            >
              <BrushPreview brush={brush} index={i} />
            </button>
          ))}
        </div>
      </section>
    </div>
  );
}

function BrushSettings() {
  return (
    <div className="flex min-h-0 flex-1">
      <div className="flex w-5 flex-col">
        <SideTab slanted label="Brush Settings" height={101} className="h-[101px] pt-[25px]" />
        <SideTab
          label="Info"
          height={52}
          className="h-[52px] pt-[6px]"
          icon={
            <svg className="size-[14px]" viewBox="0 0 14 14">
              <circle cx="7" cy="7" r="6.500" fill="#5b8cc4" stroke="#3e6ea6" />
              <path d="M7 3v2M7 6v5M5.500 11h3" stroke="#fff" strokeWidth="1.5" />
            </svg>
          }
        />
      </div>
      <section className="flex-1 border-2 border-[#f6f6f6] border-l-[#9a9a9a] bg-[#f0f0f0] [border-left-width:1px]">
        <PanelHeader title="Brush Settings" />
        <div className="flex flex-col pl-1">
          <p className="mt-[3px] h-5 leading-[18px]">Rotation: 0°</p>
          <Slider label="Rotation" ticks={25} major={3} />
          <p className="mt-[5px] h-[19px] leading-[18px]">Intensity: 50 %</p>
          <Slider label="Intensity" ticks={15} major={7} />
          <p className="mt-[5px] h-[18px] leading-[18px]">Options</p>
          <div className="mt-1 flex flex-col pl-[5px]">
            <Check label="inside selection" />
            <div className="mt-2"><Check label="outside selection" /></div>
            <div className="mt-2"><Check label="at or above" /></div>
            <div className="mt-[5px] ml-[6px]"><Spinner label="At or above" value={0} /></div>
            <div className="mt-[6px]"><Check label="at or below" /></div>
            <div className="mt-1 ml-[6px]"><Spinner label="At or below" value={255} /></div>
            <div className="mt-1 ml-[10px]"><Check disabled label="feather" /></div>
            <div className="mt-2"><Check label="only on" /></div>
            <button disabled className="mt-[5px] ml-[7px] h-[19px] w-[39px] border border-[#bfbfbf] bg-[#cccccc] leading-none text-[#838383]">...</button>
            <div className="mt-2"><Check label="except on" /></div>
            <button disabled className="mt-[5px] ml-[7px] h-[19px] w-[39px] border border-[#bfbfbf] bg-[#cccccc] leading-none text-[#838383]">...</button>
            <div className="mt-[7px] flex gap-[6px]"><Check label="above" /><Check label="below" /></div>
            <div className="mt-1 ml-[6px] flex items-center"><Spinner small label="Degrees" value={45} />degrees</div>
          </div>
        </div>
      </section>
    </div>
  );
}

const statusCells = [
  { text: "Location:", width: "w-[135px]" },
  { text: "", width: "w-[114px]" },
  { text: "", width: "w-[54px]" },
  { text: "", width: "w-[139px]" },
  { text: "", width: "w-[145px]" },
  { text: "", width: "w-[219px]" },
  { text: "Radius: 50", width: "w-[61px]" },
  { text: "Zoom: 100%", width: "w-[73px]" },
  { text: "", width: "w-[100px]" },
];

function StatusBar() {
  return (
    <footer className="flex h-[27px] items-start gap-[5px] bg-[#f0f0f0] pt-[6px] pl-[5px]">
      {statusCells.map((cell, i) => (
        <div key={i} className={clsx("h-[18px] shrink-0 whitespace-nowrap border border-t-[#8a8a8a] border-r-white border-b-white border-l-[#8a8a8a] leading-4", cell.width)}>
          {cell.text}
        </div>
      ))}
    </footer>
  );
}

export default function App() {
  return (
    <div className="flex h-screen flex-col overflow-hidden bg-white font-['DejaVu_Sans_Condensed','Noto_Sans',sans-serif] text-[11px] text-black">
      <TitleBar />
      <MenuBar />
      <Toolbar />
      <div className="flex min-h-0 flex-1">
        <aside className="flex w-[211px] flex-col gap-[5px] pb-[2px]">
          <ToolsPanel />
          <section className="mr-[3px] ml-[2px] h-[225px] border-2 border-[#f6f6f6] bg-[#f0f0f0]">
            <PanelHeader title="Tool Settings" />
          </section>
          <LayersPanel />
        </aside>
        <MapView />
        <aside className="ml-[6px] flex w-[168px] flex-col gap-1 pb-[2px]">
          <BrushesPanel />
          <BrushSettings />
        </aside>
      </div>
      <StatusBar />
    </div>
  );
}
